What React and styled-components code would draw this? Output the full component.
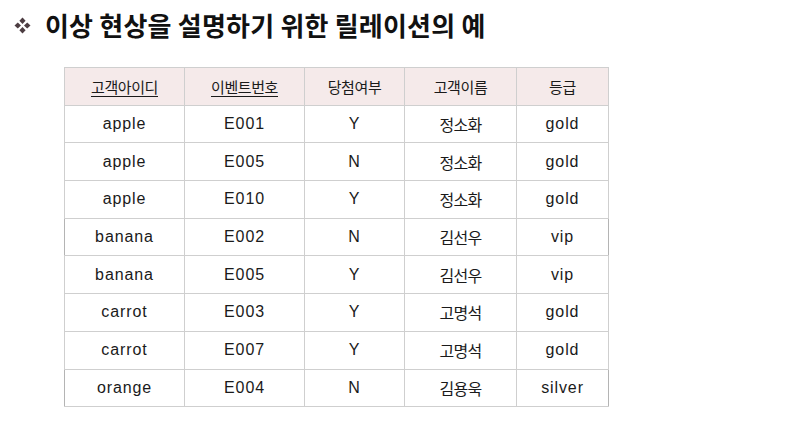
import React from "react";
import styled, { createGlobalStyle } from "styled-components";

const rows = [
  ["apple", "E001", "Y", "정소화", "gold"],
  ["apple", "E005", "N", "정소화", "gold"],
  ["apple", "E010", "Y", "정소화", "gold"],
  ["banana", "E002", "N", "김선우", "vip", true],
  ["banana", "E005", "Y", "김선우", "vip"],
  ["carrot", "E003", "Y", "고명석", "gold"],
  ["carrot", "E007", "Y", "고명석", "gold"],
  ["orange", "E004", "N", "김용욱", "silver", true],
];

const headers = [
  { label: "고객아이디", key: true },
  { label: "이벤트번호", key: true },
  { label: "당첨여부" },
  { label: "고객이름" },
  { label: "등급" },
];

const widths = [120, 120, 100, 112, 92];

const App = () => {
  return (
    <>
      <GlobalStyle />
      <Page>
        <Title>
          <Bullet viewBox="0 0 17 17">
            <path d="M8.5 0.5 L11.6 3.8 L8.5 7 L5.4 3.8 Z" />
            <path d="M8.5 10 L11.6 13.2 L8.5 16.5 L5.4 13.2 Z" />
            <path d="M3.8 5.4 L7 8.5 L3.8 11.6 L0.5 8.5 Z" />
            <path d="M13.2 5.4 L16.5 8.5 L13.2 11.6 L10 8.5 Z" />
          </Bullet>
          <h1>이상 현상을 설명하기 위한 릴레이션의 예</h1>
        </Title>
        <Table>
          <colgroup>
            {widths.map((w, i) => (
              <col key={i} style={{ width: w }} />
            ))}
          </colgroup>
          <thead>
            <tr>
              {headers.map((h) => (
                <Th key={h.label} $key={h.key}>
                  {h.label}
                </Th>
              ))}
            </tr>
          </thead>
          <tbody>
            {rows.map((r, i) => (
              <Row key={i} $strong={r[5]}>
                <Td>{r[0]}</Td>
                <Td>{r[1]}</Td>
                <Td>{r[2]}</Td>
                <Td $ko>{r[3]}</Td>
                <Td>{r[4]}</Td>
              </Row>
            ))}
          </tbody>
        </Table>
      </Page>
    </>
  );
};

export default App;

const GlobalStyle = createGlobalStyle`
  body {
    margin: 0;
    background: #ffffff;
    font-family: "Liberation Sans", "Noto Sans CJK KR", sans-serif;
  }
`;

const Page = styled.div`
  width: 800px;
  height: 425px;
  display: flex;
  flex-direction: column;
  padding: 7px 0 0 14px;
  box-sizing: border-box;
`;

const Title = styled.div`
  display: flex;
  align-items: center;
  gap: 14px;
  height: 34px;

  h1 {
    margin: 0;
    font-family: "Noto Sans CJK KR", sans-serif;
    font-size: 26px;
    font-weight: 700;
    color: #111111;
    letter-spacing: 0.2px;
  }
`;

const Bullet = styled.svg`
  width: 17px;
  height: 17px;
  fill: #4d3d42;
  margin-top: 2px;
`;

const Table = styled.table`
  margin: 26px 0 0 50px;
  border-collapse: collapse;
  table-layout: fixed;
  width: 544px;
  color: #1a1a1a;
`;

const Th = styled.th`
  height: 36.7px;
  padding: 0;
  background: #f5eaea;
  border: 1px solid #cfcfcf;
  font-family: "Noto Sans CJK KR", sans-serif;
  font-size: 15px;
  font-weight: 400;
  letter-spacing: -0.4px;
  text-decoration: ${(p) => (p.$key ? "underline" : "none")};
  text-underline-offset: 3px;
  text-decoration-thickness: 1px;
`;

const Row = styled.tr`
  td:first-child {
    border-left-color: ${(p) => (p.$strong ? "#b4b4b4" : "#cfcfcf")};
  }
  td:last-child {
    border-right-color: ${(p) => (p.$strong ? "#b4b4b4" : "#cfcfcf")};
  }
`;

const Td = styled.td`
  height: 36.7px;
  padding: 0;
  text-align: center;
  border: 1px solid #cfcfcf;
  font-family: ${(p) =>
    p.$ko ? `"Noto Sans CJK KR", sans-serif` : `"Liberation Sans", sans-serif`};
  font-size: 16px;
  letter-spacing: ${(p) => (p.$ko ? "-0.8px" : "0.9px")};
`;
